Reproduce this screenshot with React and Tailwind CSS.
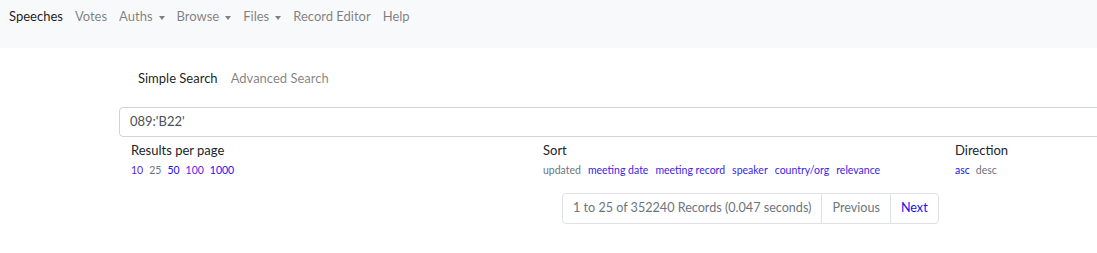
const navItems = [
  { label: 'Speeches', active: true },
  { label: 'Votes' },
  { label: 'Auths', caret: true },
  { label: 'Browse', caret: true },
  { label: 'Files', caret: true },
  { label: 'Record Editor' },
  { label: 'Help' },
];

const perPage = [
  { v: '10', c: 'text-[#5b1ee0]' },
  { v: '25', c: 'text-[#6c757d]' },
  { v: '50', c: 'text-[#1a0ff0]' },
  { v: '100', c: 'text-[#5b1ee0]' },
  { v: '1000', c: 'text-[#1a0ff0]' },
];

const sorts = [
  { v: 'updated', c: 'text-[#6c757d]' },
  { v: 'meeting date', c: 'text-[#3a1ee8]' },
  { v: 'meeting record', c: 'text-[#3a1ee8]' },
  { v: 'speaker', c: 'text-[#3a1ee8]' },
  { v: 'country/org', c: 'text-[#3a1ee8]' },
  { v: 'relevance', c: 'text-[#3a1ee8]' },
];

function Caret() {
  return <span className="inline-block ml-[6px] align-middle border-x-[3px] border-x-transparent border-t-[4px] border-t-[#808080]" />;
}

export default function App() {
  return (
    <div className="w-full h-[253px] overflow-hidden bg-white font-['Lato',sans-serif] text-[#212529]">
      {/* Navbar */}
      <nav className="h-[48px] bg-[#f8f9fa] flex items-start pt-[5px] pl-[9px] text-[13px]">
        {navItems.map(({ label, active, caret }) => (
          <span
            key={label}
            className={`mr-[12px] leading-[22px] ${active ? 'text-black/90' : 'text-black/50'}`}
          >
            {label}
            {caret && <Caret />}
          </span>
        ))}
      </nav>

      <div className="ml-[119px] w-[1236px]">
        {/* Tabs */}
        <div className="flex gap-[13px] pl-[19px] pt-[20px] text-[13px] leading-[20px]">
          <span className="text-black/90">Simple Search</span>
          <span className="text-black/50">Advanced Search</span>
        </div>

        {/* Search input */}
        <div className="mt-[19px] h-[30px] w-full border border-[#ced4da] rounded-[4px] flex items-center px-[10px] text-[13px] text-[#495057]">
          089:'B22'
        </div>

        {/* Options row */}
        <div className="flex pt-[4px]">
          <div className="w-[412px] px-[12px]">
            <div className="text-[13px] leading-[18px]">Results per page</div>
            <div className="flex gap-[6px] text-[10.5px] leading-[16px] mt-[3px]">
              {perPage.map(({ v, c }) => (
                <span key={v} className={c}>{v}</span>
              ))}
            </div>
          </div>
          <div className="w-[412px] px-[12px]">
            <div className="text-[13px] leading-[18px]">Sort</div>
            <div className="flex gap-[7px] text-[10.5px] leading-[16px] mt-[3px]">
              {sorts.map(({ v, c }) => (
                <span key={v} className={c}>{v}</span>
              ))}
            </div>
          </div>
          <div className="w-[412px] px-[12px]">
            <div className="text-[13px] leading-[18px]">Direction</div>
            <div className="flex gap-[6px] text-[10.5px] leading-[16px] mt-[3px]">
              <span className="text-[#1a0ff0]">asc</span>
              <span className="text-[#6c757d]">desc</span>
            </div>
          </div>
        </div>

        {/* Pagination */}
        <div className="mt-[15px] ml-[443px] inline-flex border border-[#dee2e6] rounded-[4px] h-[31px] text-[12.6px] text-[#6c757d]">
          <span className="flex items-center px-[10px] border-r border-[#dee2e6]">1 to 25 of 352240 Records (0.047 seconds)</span>
          <span className="flex items-center px-[10px] border-r border-[#dee2e6]">Previous</span>
          <span className="flex items-center px-[10px] text-[#1a0ff0]">Next</span>
        </div>
      </div>
    </div>
  );
}
